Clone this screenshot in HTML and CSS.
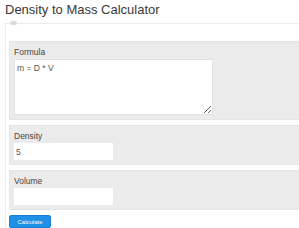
FILE: index.html
```html
<!DOCTYPE html>
<html lang="en">
<head>
    <meta charset="UTF-8">
    <title>Density to Mass Calculator</title>
    <link rel="stylesheet" href="styles.css">
</head>
<body>
    <div class="page">
        <h1 class="title">Density to Mass Calculator</h1>
        <form class="calc">
            <fieldset class="calc-box">
                <legend class="calc-legend"></legend>
                <div class="field">
                    <label for="formula">Formula</label>
                    <textarea id="formula" class="formula">m = D * V</textarea>
                </div>
                <div class="field">
                    <label for="density">Density</label>
                    <input type="text" id="density" class="num" value="5">
                </div>
                <div class="field">
                    <label for="volume">Volume</label>
                    <input type="text" id="volume" class="num" value="">
                </div>
                <button type="button" class="calc-btn">Calculate</button>
            </fieldset>
        </form>
    </div>
</body>
</html>
```

FILE: styles.css
```css
/* Page */
body {
    margin: 0;
    padding: 0;
    background: #fff;
    font-family: "Liberation Sans", Arial, sans-serif;
}

.page {
    padding-left: 5px;
}

.title {
    margin: 0;
    padding-top: 2px;
    font-size: 13px;
    line-height: 15px;
    font-weight: normal;
    color: #383838;
}

.calc {
    margin: 4px 0 0 0;
}

.calc-box {
    margin: 0;
    padding: 16px 0 0 3px;
    border: 1px solid #ececec;
    border-right: none;
    min-width: 0;
}

.calc-legend {
    width: 7px;
    height: 4px;
    padding: 0;
    margin-left: 1px;
    background: #dcdcdc;
    border-radius: 2px;
}

/* Fields */
.field {
    display: flex;
    flex-direction: column;
    align-items: flex-start;
    background: #ebebeb;
    border: 1px solid #e5e5e5;
    border-right: none;
    padding: 5px 0 4px 4px;
    margin-bottom: 5px;
}

.field label {
    font-size: 8.5px;
    line-height: 11px;
    color: #444;
    margin-bottom: 1px;
}

.formula,
.num {
    font-family: "Liberation Sans", Arial, sans-serif;
    font-size: 8.5px;
    color: #555;
    background: #fff;
    box-sizing: border-box;
    margin: 0;
}

.formula {
    width: 199px;
    height: 56px;
    padding: 3px 2px;
    border: 1px solid #e2e2e2;
    border-radius: 0;
}

.num {
    width: 99px;
    height: 17px;
    padding: 0 2px;
    border: none;
    outline: none;
}

/* Button */
.calc-btn {
    display: block;
    width: 42px;
    height: 13px;
    padding: 0;
    margin: 0 0 4px 0;
    font-family: "Liberation Sans", Arial, sans-serif;
    font-size: 6px;
    color: #fff;
    background: #1e90e6;
    border: 1px solid #1a7fcc;
    border-radius: 2px;
    cursor: pointer;
}
```
